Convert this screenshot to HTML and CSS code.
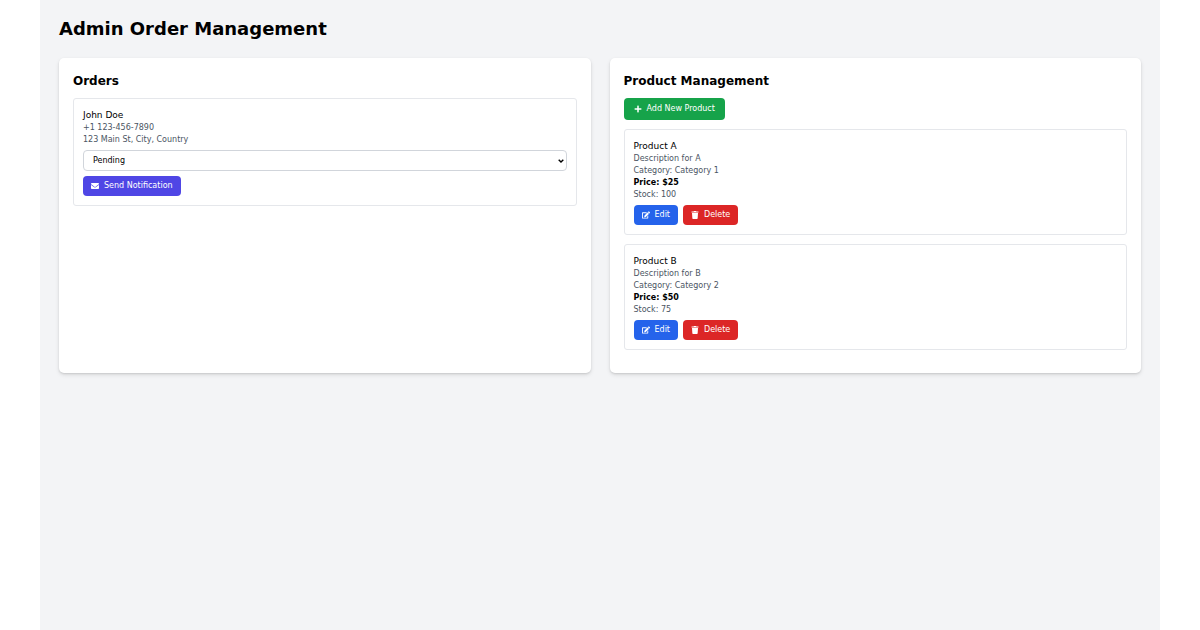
FILE: index.html
```html
<!DOCTYPE html>
<html lang="en">
<head>
    <meta charset="UTF-8">
    <meta name="viewport" content="width=device-width, initial-scale=1.0">
    <title>Admin Order Management</title>
    <link rel="stylesheet" href="styles.css">
</head>
<body>
    <svg class="sprite" aria-hidden="true">
        <symbol id="icon-plus" viewBox="0 0 448 512">
            <path d="M416 208H272V64c0-17.67-14.33-32-32-32h-32c-17.67 0-32 14.33-32 32v144H32c-17.67 0-32 14.33-32 32v32c0 17.67 14.33 32 32 32h144v144c0 17.67 14.33 32 32 32h32c17.67 0 32-14.33 32-32V304h144c17.67 0 32-14.33 32-32v-32c0-17.67-14.33-32-32-32z"/>
        </symbol>
        <symbol id="icon-envelope" viewBox="0 0 512 512">
            <path d="M502.3 190.8c3.9-3.1 9.7-.2 9.7 4.7V400c0 26.5-21.5 48-48 48H48c-26.5 0-48-21.5-48-48V195.6c0-5 5.7-7.8 9.7-4.7 22.4 17.4 52.1 39.5 154.1 113.6 21.1 15.4 56.7 47.8 92.2 47.6 35.7.3 72-32.8 92.3-47.6 102-74.1 131.6-96.3 154-113.7zM256 320c23.2.4 56.6-29.2 73.4-41.4 132.7-96.3 142.8-104.7 173.4-128.7 5.8-4.5 9.2-11.5 9.2-18.9v-19c0-26.5-21.5-48-48-48H48c-26.5 0-48 21.5-48 48v19c0 7.4 3.4 14.3 9.2 18.9 30.6 23.9 40.7 32.4 173.4 128.7 16.8 12.2 50.2 41.8 73.4 41.4z"/>
        </symbol>
        <symbol id="icon-edit" viewBox="0 0 576 512">
            <path d="M402.6 83.2l90.2 90.2c3.8 3.8 3.8 10 0 13.8L274.4 405.6l-92.8 10.3c-12.4 1.4-22.9-9.1-21.5-21.5l10.3-92.8L388.8 83.2c3.8-3.8 10-3.8 13.8 0zm162-22.9l-48.8-48.8c-15.2-15.2-39.9-15.2-55.2 0l-35.4 35.4c-3.8 3.8-3.8 10 0 13.8l90.2 90.2c3.8 3.8 10 3.8 13.8 0l35.4-35.4c15.2-15.3 15.2-40 0-55.2zM384 346.2V448H64V128h229.8c3.2 0 6.2-1.3 8.5-3.5l40-40c7.6-7.6 2.2-20.5-8.5-20.5H48C21.5 64 0 85.5 0 112v352c0 26.5 21.5 48 48 48h352c26.5 0 48-21.5 48-48V306.2c0-10.7-12.9-16-20.5-8.5l-40 40c-2.2 2.3-3.5 5.3-3.5 8.5z"/>
        </symbol>
        <symbol id="icon-trash" viewBox="0 0 448 512">
            <path d="M432 32H312l-9.4-18.7A24 24 0 0 0 281.1 0H166.8a23.72 23.72 0 0 0-21.4 13.3L136 32H16A16 16 0 0 0 0 48v32a16 16 0 0 0 16 16h416a16 16 0 0 0 16-16V48a16 16 0 0 0-16-16zM53.2 467a48 48 0 0 0 47.9 45h245.8a48 48 0 0 0 47.9-45L416 128H32z"/>
        </symbol>
    </svg>

    <main class="container">
        <h1>Admin Order Management</h1>

        <div class="panels">
            <section class="panel">
                <h2>Orders</h2>
                <div class="card">
                    <h3>John Doe</h3>
                    <p>+1 123-456-7890</p>
                    <p>123 Main St, City, Country</p>
                    <select class="status" aria-label="Order status">
                        <option selected>Pending</option>
                        <option>Shipped</option>
                        <option>Delivered</option>
                    </select>
                    <button type="button" class="btn btn-notify">
                        <svg class="icon" aria-hidden="true"><use href="#icon-envelope"/></svg>
                        Send Notification
                    </button>
                </div>
            </section>

            <section class="panel">
                <h2>Product Management</h2>
                <button type="button" class="btn btn-add">
                    <svg class="icon" aria-hidden="true"><use href="#icon-plus"/></svg>
                    Add New Product
                </button>

                <div class="card">
                    <h3>Product A</h3>
                    <p>Description for A</p>
                    <p>Category: Category 1</p>
                    <p class="price">Price: $25</p>
                    <p>Stock: 100</p>
                    <div class="actions">
                        <button type="button" class="btn btn-edit">
                            <svg class="icon" aria-hidden="true"><use href="#icon-edit"/></svg>
                            Edit
                        </button>
                        <button type="button" class="btn btn-delete">
                            <svg class="icon" aria-hidden="true"><use href="#icon-trash"/></svg>
                            Delete
                        </button>
                    </div>
                </div>

                <div class="card">
                    <h3>Product B</h3>
                    <p>Description for B</p>
                    <p>Category: Category 2</p>
                    <p class="price">Price: $50</p>
                    <p>Stock: 75</p>
                    <div class="actions">
                        <button type="button" class="btn btn-edit">
                            <svg class="icon" aria-hidden="true"><use href="#icon-edit"/></svg>
                            Edit
                        </button>
                        <button type="button" class="btn btn-delete">
                            <svg class="icon" aria-hidden="true"><use href="#icon-trash"/></svg>
                            Delete
                        </button>
                    </div>
                </div>
            </section>
        </div>
    </main>
</body>
</html>
```

FILE: styles.css
```css
* {
    box-sizing: border-box;
    margin: 0;
}
body {
    background-color: #fff;
    color: #000;
    font-family: 'DejaVu Sans', sans-serif;
    font-size: 8px;
    line-height: 12px;
}
.sprite {
    display: none;
}
.container {
    max-width: 1120px;
    min-height: 100vh;
    margin: 0 auto;
    padding: 19px;
    background-color: #f3f4f6;
}
h1 {
    margin-bottom: 19px;
    font-size: 18px;
    line-height: 20px;
}
h2 {
    margin-bottom: 8px;
    font-size: 12px;
    line-height: 18px;
}
h3 {
    font-size: 9px;
    font-weight: normal;
    line-height: 14px;
}
.panels {
    display: grid;
    grid-template-columns: 1fr 1fr;
    gap: 19px;
}
.panel {
    padding: 14px;
    background-color: #fff;
    border-radius: 5px;
    box-shadow: 0 2px 4px rgba(0, 0, 0, 0.1), 0 1px 2px rgba(0, 0, 0, 0.1);
}
.card {
    margin-bottom: 9px;
    padding: 9px;
    border: 1px solid #e5e7eb;
    border-radius: 3px;
}
.card p {
    color: #4b5563;
}
.card .price {
    color: #000;
    font-weight: bold;
}
.status {
    display: block;
    width: 100%;
    height: 21px;
    margin: 4px 0 5px;
    padding: 0 9px;
    appearance: none;
    background: #fff url("data:image/svg+xml,%3Csvg xmlns='http://www.w3.org/2000/svg' viewBox='0 0 6 4'%3E%3Cpath d='M.7 .7L3 3L5.3 .7' fill='none' stroke='%23000' stroke-width='1.4'/%3E%3C/svg%3E") no-repeat right 2px center / 6px 4px;
    border: 1px solid #d1d5db;
    border-radius: 4px;
    color: #000;
    font: inherit;
}
.btn {
    display: flex;
    align-items: center;
    gap: 5px;
    padding: 4px 8px;
    border: none;
    border-radius: 4px;
    color: #fff;
    font: inherit;
    cursor: pointer;
}
.icon {
    width: 8px;
    height: 8px;
    fill: currentColor;
}
.btn-notify {
    background-color: #4f46e5;
}
.btn-add {
    margin-bottom: 9px;
    padding: 5px 10px;
    background-color: #16a34a;
}
.btn-edit {
    background-color: #2563eb;
}
.btn-delete {
    background-color: #dc2626;
}
.actions {
    display: flex;
    gap: 5px;
    margin-top: 4px;
}
@media (max-width: 600px) {
    .panels {
        grid-template-columns: 1fr;
    }
}
```
